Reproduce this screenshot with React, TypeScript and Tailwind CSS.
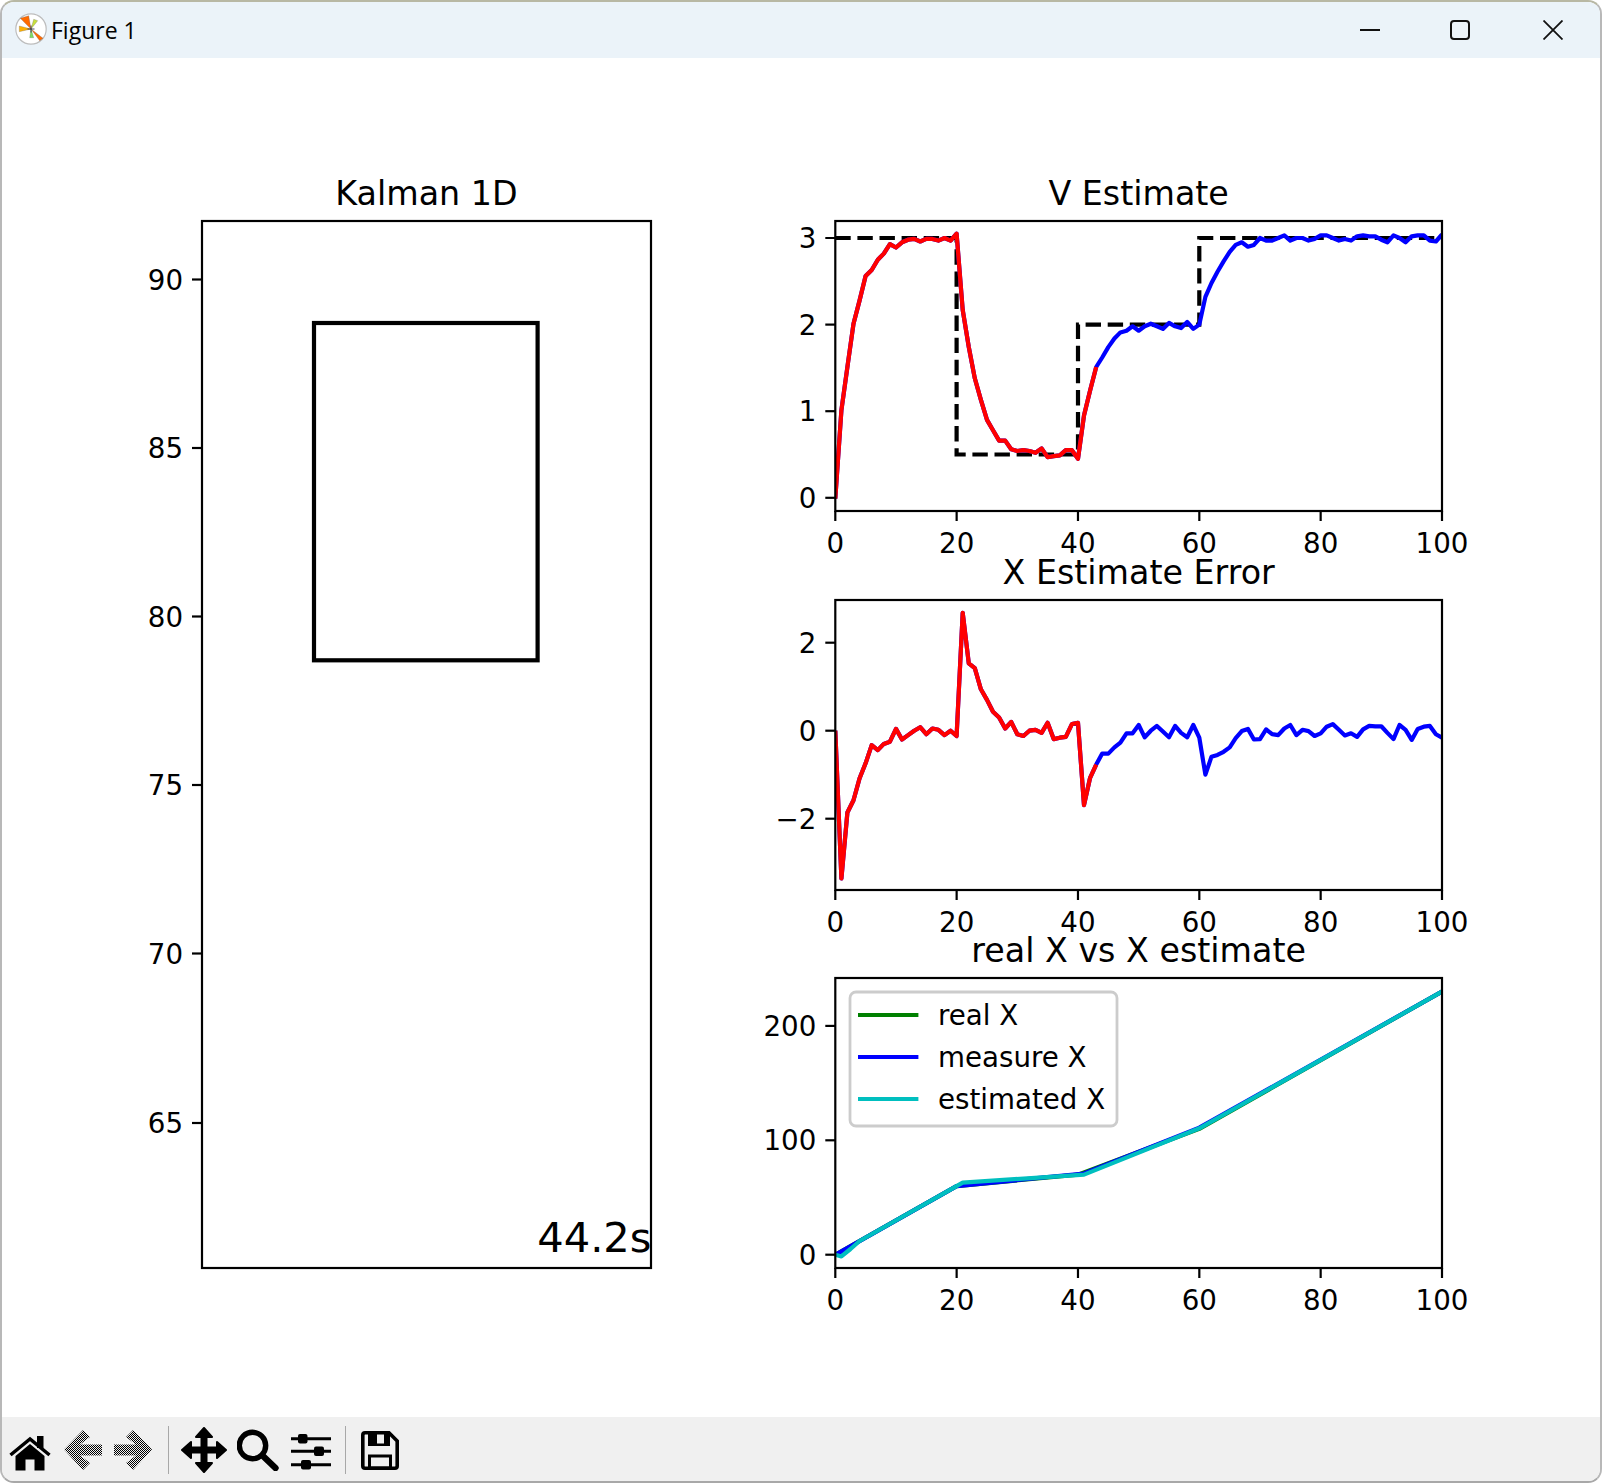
import React from "react";

// --- Figure geometry ---
type Tick = { v: number; label: string };

const xTicks: Tick[] = [0, 20, 40, 60, 80, 100].map((v) => ({ v, label: String(v) }));

// estimator output per step, read off the figure
const vEstimate = [
    -0.01, 1.01, 1.51, 2.01, 2.28, 2.56, 2.63, 2.75, 2.82, 2.93, 2.89, 2.95, 2.98, 2.99, 2.96, 2.99, 2.99, 2.97, 3.0, 2.97,
    3.05, 2.17, 1.74, 1.38, 1.13, 0.9, 0.78, 0.66, 0.66, 0.56, 0.54, 0.55, 0.54, 0.52, 0.57, 0.47, 0.48, 0.49, 0.55, 0.55,
    0.45, 0.95, 1.24, 1.51, 1.62, 1.74, 1.84, 1.91, 1.93, 1.98, 1.93, 1.98, 2.01, 1.98, 1.95, 2.02, 1.98, 1.96, 2.03, 1.95,
    2.0, 2.32, 2.48, 2.61, 2.73, 2.84, 2.92, 2.95, 2.9, 2.92, 3.0, 2.97, 2.97, 3.0, 3.03, 2.97, 3.0, 3.0, 2.97, 2.99,
    3.03, 3.03, 3.0, 2.97, 2.99, 2.97, 3.02, 3.03, 3.02, 3.02, 2.98, 2.95, 3.03, 3.0, 2.95, 3.02, 3.03, 3.03, 2.97, 2.96,
    3.04,
];

const xError = [
    0, -3.36, -1.86, -1.58, -1.08, -0.74, -0.33, -0.44, -0.3, -0.25, 0.04, -0.2, -0.1, 0, 0.08, -0.08, 0.05, 0.02, -0.1, 0,
    -0.12, 2.68, 1.53, 1.42, 0.94, 0.7, 0.43, 0.3, 0.05, 0.2, -0.08, -0.12, 0, 0.02, -0.05, 0.18, -0.19, -0.16, -0.14, 0.15,
    0.18, -1.69, -1.07, -0.77, -0.52, -0.52, -0.38, -0.27, -0.06, -0.06, 0.13, -0.15, 0, 0.11, -0.02, -0.15, 0.11, -0.05, -0.15, 0.13,
    -0.16, -1.0, -0.59, -0.55, -0.48, -0.38, -0.17, -0.01, 0.04, -0.2, -0.19, 0.03, -0.08, -0.1, 0.05, 0.13, -0.1, 0.02, -0.01, -0.12,
    -0.06, 0.09, 0.15, 0.02, -0.11, -0.06, -0.14, 0.03, 0.11, 0.1, 0.1, -0.05, -0.19, 0.13, 0.02, -0.21, 0.04, 0.09, 0.11, -0.08,
    -0.16,
];

const toPairs = (ys: number[]): [number, number][] => ys.map((y, i) => [i, y]);

const AXIS_L = 75.3;
const AXIS_R = 682;
const AXIS_T = 51;
const AXIS_B = 341;
const PX_PER_X = (AXIS_R - AXIS_L) / 100;
const TICK_FONT = 27.7;
const TITLE_FONT = 33.3;
const LINE = 4.2;
const SPINE = 2.2;

const sx = (x: number) => AXIS_L + x * PX_PER_X;
const linePoints = (pts: [number, number][], sy: (y: number) => number) =>
    pts.map(([x, y]) => `${sx(x).toFixed(1)},${sy(y).toFixed(1)}`).join(" ");

// --- Small chart shell: spines, ticks, labels, title ---
interface ChartProps {
    id: string;
    title: string;
    height: number;
    sy: (y: number) => number;
    yTicks: Tick[];
    children: React.ReactNode;
}

const Chart: React.FC<ChartProps> = ({ id, title, height, sy, yTicks, children }) => (
    <svg width={720} height={height} className="block overflow-visible font-['DejaVu_Sans',sans-serif]">
        <defs>
            <clipPath id={id}>
                <rect x={AXIS_L} y={AXIS_T} width={AXIS_R - AXIS_L} height={AXIS_B - AXIS_T} />
            </clipPath>
        </defs>
        <text x={(AXIS_L + AXIS_R) / 2} y={AXIS_T - 16} textAnchor="middle" fontSize={TITLE_FONT} fill="#000">
            {title}
        </text>
        <g clipPath={`url(#${id})`} fill="none">
            {children}
        </g>
        <rect x={AXIS_L} y={AXIS_T} width={AXIS_R - AXIS_L} height={AXIS_B - AXIS_T} fill="none" stroke="#000" strokeWidth={SPINE} />
        {xTicks.map((t) => (
            <g key={t.v}>
                <line x1={sx(t.v)} x2={sx(t.v)} y1={AXIS_B} y2={AXIS_B + 10} stroke="#000" strokeWidth={SPINE} />
                <text x={sx(t.v)} y={AXIS_B + 42} textAnchor="middle" fontSize={TICK_FONT} fill="#000">
                    {t.label}
                </text>
            </g>
        ))}
        {yTicks.map((t) => (
            <g key={t.v}>
                <line x1={AXIS_L - 10} x2={AXIS_L} y1={sy(t.v)} y2={sy(t.v)} stroke="#000" strokeWidth={SPINE} />
                <text x={AXIS_L - 19} y={sy(t.v) + 10} textAnchor="end" fontSize={TICK_FONT} fill="#000">
                    {t.label}
                </text>
            </g>
        ))}
    </svg>
);

const VEstimateChart = () => {
    const sy = (v: number) => 51 + 17 + (3 - v) * 86.6;
    const target: [number, number][] = [
        [0, 3], [20, 3], [20, 0.5], [40, 0.5], [40, 2], [60, 2], [60, 3], [100, 3],
    ];
    return (
        <Chart id="clip-v" title="V Estimate" height={379} sy={sy} yTicks={[0, 1, 2, 3].map((v) => ({ v, label: String(v) }))}>
            <polyline points={linePoints(target, sy)} stroke="#000" strokeWidth={LINE} strokeDasharray="15.4 6.7" />
            <polyline points={linePoints(toPairs(vEstimate), sy)} stroke="#0000ff" strokeWidth={LINE} strokeLinejoin="round" />
            <polyline points={linePoints(toPairs(vEstimate).slice(0, 44), sy)} stroke="#ff0000" strokeWidth={LINE} strokeLinejoin="round" />
        </Chart>
    );
};

const XErrorChart = () => {
    const sy = (v: number) => 51 + 130.7 - v * 44;
    const ticks: Tick[] = [
        { v: 2, label: "2" },
        { v: 0, label: "0" },
        { v: -2, label: "\u22122" },
    ];
    return (
        <Chart id="clip-e" title="X Estimate Error" height={378} sy={sy} yTicks={ticks}>
            <polyline points={linePoints(toPairs(xError), sy)} stroke="#0000ff" strokeWidth={LINE} strokeLinejoin="round" />
            <polyline points={linePoints(toPairs(xError).slice(0, 44), sy)} stroke="#ff0000" strokeWidth={LINE} strokeLinejoin="round" />
        </Chart>
    );
};

const LEGEND = [
    { label: "real X", color: "#008000", y: 88 },
    { label: "measure X", color: "#0000ff", y: 130 },
    { label: "estimated X", color: "#00bfbf", y: 172 },
];

const RealVsEstimateChart = () => {
    const sy = (v: number) => 51 + 276.7 - v * 1.144;
    const real: [number, number][] = [[0, 0], [20, 60], [40, 70], [60, 110], [100, 230]];
    const measured: [number, number][] = [[0, 0], [1, 3], [20, 60], [41, 71], [60, 111], [100, 230]];
    const estimated: [number, number][] = [[0, 0], [1, -1.5], [2.5, 5], [4, 12], [21, 63], [41, 70], [60, 110.5], [100, 230]];
    return (
        <Chart id="clip-x" title="real X vs X estimate" height={378} sy={sy} yTicks={[0, 100, 200].map((v) => ({ v, label: String(v) }))}>
            <polyline points={linePoints(real, sy)} stroke="#008000" strokeWidth={LINE} strokeLinejoin="round" />
            <polyline points={linePoints(measured, sy)} stroke="#0000ff" strokeWidth={LINE} strokeLinejoin="round" />
            <polyline points={linePoints(estimated, sy)} stroke="#00bfbf" strokeWidth={LINE} strokeLinejoin="round" />
            <rect x={90} y={65} width={267} height={134} rx={6} fill="#fff" fillOpacity={0.8} stroke="#ccc" strokeWidth={2.8} />
            {LEGEND.map((row) => (
                <g key={row.label}>
                    <line x1={98} x2={158.4} y1={row.y} y2={row.y} stroke={row.color} strokeWidth={LINE} />
                    <text x={178} y={row.y + 9.5} fontSize={TICK_FONT} fill="#000" stroke="none">
                        {row.label}
                    </text>
                </g>
            ))}
        </Chart>
    );
};

// Tall axes on the left with the cart box and the time stamp
const KalmanAxes = () => {
    const L = 72;
    const R = 521;
    const T = 51;
    const B = 1098;
    const ticks = [
        { label: "90", y: 109.5 },
        { label: "85", y: 278 },
        { label: "80", y: 446.5 },
        { label: "75", y: 615 },
        { label: "70", y: 783.5 },
        { label: "65", y: 953 },
    ];
    return (
        <svg width={530} height={1130} className="block shrink-0 font-['DejaVu_Sans',sans-serif]">
            <text x={(L + R) / 2} y={T - 16} textAnchor="middle" fontSize={TITLE_FONT} fill="#000">
                Kalman 1D
            </text>
            <rect x={L} y={T} width={R - L} height={B - T} fill="none" stroke="#000" strokeWidth={SPINE} />
            <rect x={184} y={153} width={223.6} height={337.3} fill="none" stroke="#000" strokeWidth={LINE} />
            {ticks.map((t) => (
                <g key={t.label}>
                    <line x1={L - 10} x2={L} y1={t.y} y2={t.y} stroke="#000" strokeWidth={SPINE} />
                    <text x={L - 19} y={t.y + 10} textAnchor="end" fontSize={TICK_FONT} fill="#000">
                        {t.label}
                    </text>
                </g>
            ))}
            <text x={R + 0.5} y={1082} textAnchor="end" fontSize={41.6} fill="#000">
                44.2s
            </text>
        </svg>
    );
};

// --- Window chrome ---
const AppLogo = () => (
    <svg width={32} height={32} viewBox="-16 -16 32 32" className="mb-[2px] shrink-0">
        <circle cx={0} cy={0} r={15.2} fill="#fff" stroke="#bdbdbd" strokeWidth={1.2} />
        <polygon points="0,0 -10.7,-10.7 -2.3,-13.3" fill="#ff6a00" stroke="#666" strokeWidth={0.3} />
        <polygon points="0,0 12,9.3 8.7,11.7" fill="#ff6a00" stroke="#666" strokeWidth={0.3} />
        <polygon points="0,0 -11.7,-3 -11.7,2.7" fill="#ffb000" stroke="#666" strokeWidth={0.3} />
        <polygon points="0,0 -1.3,8.7 2.7,8.7" fill="#7fdc5f" stroke="#666" strokeWidth={0.3} />
        <polygon points="0,0 2.7,-9.7 6.7,-8.3" fill="#c8e03c" stroke="#666" strokeWidth={0.3} />
        <path d="M-3.5 0 L3.5 0 M0 -3.5 L0 3.5" stroke="#223" strokeWidth={0.8} />
    </svg>
);

const TitleBar = () => (
    <div className="flex h-[56px] shrink-0 items-center bg-[#ebf3f9] pl-[13px]">
        <AppLogo />
        <span className="ml-[4px] font-['Open_Sans',sans-serif] text-[23px] leading-none text-black">Figure 1</span>
        <div className="ml-auto flex items-center pr-[37px]">
            <svg width={20} height={20} viewBox="0 0 20 20" className="mr-[70px]">
                <line x1={0} x2={20} y1={10} y2={10} stroke="#111" strokeWidth={2} />
            </svg>
            <svg width={20} height={20} viewBox="0 0 20 20" className="mr-[73px]">
                <rect x={1} y={1} width={18} height={18} rx={3} fill="none" stroke="#111" strokeWidth={2} />
            </svg>
            <svg width={20} height={20} viewBox="0 0 20 20">
                <path d="M0.5 0.5 L19.5 19.5 M19.5 0.5 L0.5 19.5" stroke="#111" strokeWidth={1.8} />
            </svg>
        </div>
    </div>
);

const Dither = ({ id }: { id: string }) => (
    <pattern id={id} width={2} height={2} patternUnits="userSpaceOnUse">
        <rect width={1} height={1} fill="#000" />
        <rect x={1} y={1} width={1} height={1} fill="#000" />
    </pattern>
);

const HomeIcon = () => (
    <svg width={42} height={35} viewBox="0 0 42 35" className="mt-[6px] shrink-0">
        <path d="M1.5 19 L21 3 L40.5 19" fill="none" stroke="#000" strokeWidth={3.5} />
        <rect x={28} y={0} width={6.5} height={12} fill="#000" />
        <path d="M6.5 20 L21 8 L35.5 20 L35.5 34.5 L25.5 34.5 L25.5 23.5 L16.5 23.5 L16.5 34.5 L6.5 34.5 Z" fill="#000" />
    </svg>
);

const BackIcon = () => (
    <svg width={38} height={40} viewBox="0 0 38 40" className="shrink-0">
        <defs>
            <Dither id="dither-back" />
        </defs>
        <path
            d="M0 19.5 L19 0 L26 7 L16 14.5 L38 14.5 L38 25.5 L16 25.5 L26 33 L19 40 Z"
            fill="url(#dither-back)"
        />
    </svg>
);

const ForwardIcon = () => (
    <svg width={38} height={40} viewBox="0 0 38 40" className="shrink-0">
        <defs>
            <Dither id="dither-forward" />
        </defs>
        <path
            d="M38 19.5 L19 0 L12 7 L22 14.5 L0 14.5 L0 25.5 L22 25.5 L12 33 L19 40 Z"
            fill="url(#dither-forward)"
        />
    </svg>
);

const MoveIcon = () => (
    <svg width={46} height={46} viewBox="-23 -23 46 46" className="shrink-0">
        <polygon
            points="0,-22 8,-13 2.5,-13 2.5,-2.5 13,-2.5 13,-8 22,0 13,8 13,2.5 2.5,2.5 2.5,13 8,13 0,22 -8,13 -2.5,13 -2.5,2.5 -13,2.5 -13,8 -22,0 -13,-8 -13,-2.5 -2.5,-2.5 -2.5,-13 -8,-13"
            fill="#000"
            stroke="#000"
            strokeWidth={2}
            strokeLinejoin="round"
        />
    </svg>
);

const SearchIcon = () => (
    <svg width={42} height={42} viewBox="0 0 42 42" className="shrink-0">
        <circle cx={15.5} cy={16.5} r={13.2} fill="none" stroke="#000" strokeWidth={5.4} />
        <line x1={27} y1={28} x2={38.5} y2={39} stroke="#000" strokeWidth={6.4} strokeLinecap="round" />
    </svg>
);

const SlidersIcon = () => (
    <svg width={40} height={36} viewBox="0 0 40 36" className="mt-[4px] shrink-0">
        <g stroke="#000" strokeWidth={3}>
            <line x1={0} x2={40} y1={4.7} y2={4.7} />
            <line x1={0} x2={40} y1={17.3} y2={17.3} />
            <line x1={0} x2={40} y1={30.7} y2={30.7} />
        </g>
        <rect x={7} y={0} width={9.5} height={9.5} rx={2} fill="#000" />
        <rect x={23} y={12.5} width={10} height={9.5} rx={2} fill="#000" />
        <rect x={10} y={26} width={10} height={9.5} rx={2} fill="#000" />
    </svg>
);

const SaveIcon = () => (
    <svg width={38} height={39} viewBox="0 0 38 39" className="shrink-0">
        <path
            d="M4 1.8 L28 1.8 L36.2 10 L36.2 35 Q36.2 37.2 34 37.2 L4 37.2 Q1.8 37.2 1.8 35 L1.8 4 Q1.8 1.8 4 1.8 Z"
            fill="none"
            stroke="#000"
            strokeWidth={3.6}
        />
        <rect x={7} y={2} width={22} height={13} fill="#000" />
        <rect x={16} y={3.5} width={7} height={9} fill="#f0f0f0" />
        <rect x={8.5} y={25} width={21} height={12} fill="none" stroke="#000" strokeWidth={3} />
    </svg>
);

const Toolbar = () => (
    <div className="flex h-[64px] shrink-0 items-center bg-[#f0f0f0] pl-[7px] pt-[2px]">
        <HomeIcon />
        <div className="ml-[13px]"><BackIcon /></div>
        <div className="ml-[12px]"><ForwardIcon /></div>
        <div className="ml-[16px] h-[48px] w-px bg-[#a8a8a8]" />
        <div className="ml-[12px]"><MoveIcon /></div>
        <div className="ml-[10px]"><SearchIcon /></div>
        <div className="ml-[12px]"><SlidersIcon /></div>
        <div className="ml-[14px] h-[48px] w-px bg-[#a8a8a8]" />
        <div className="ml-[15px]"><SaveIcon /></div>
    </div>
);

const App: React.FC = () => (
    <div className="h-[1484px] w-[1604px] bg-white">
        <div className="flex h-[1483px] w-[1602px] flex-col overflow-hidden rounded-[14px] border-x-2 border-t-2 border-b-2 border-x-[#b8b8b8] border-t-[#b8b8a4] border-b-[#a8a8a8] bg-white">
            <TitleBar />
            <div className="flex min-h-0 flex-1 items-start pl-[128px] pt-[112px]">
                <KalmanAxes />
                <div className="ml-[100px] flex w-[720px] flex-col">
                    <VEstimateChart />
                    <XErrorChart />
                    <RealVsEstimateChart />
                </div>
            </div>
            <Toolbar />
        </div>
    </div>
);

export default App;
